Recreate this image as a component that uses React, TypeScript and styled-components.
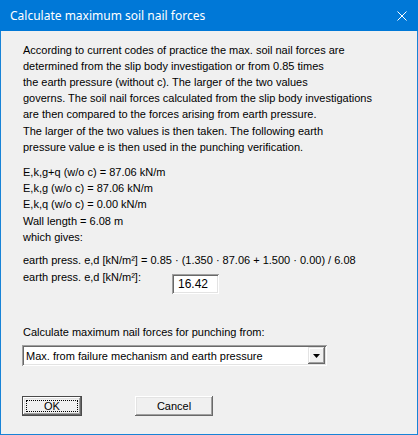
import styled, { createGlobalStyle } from 'styled-components'

const GlobalStyle = createGlobalStyle`
  html, body {
    margin: 0;
    padding: 0;
    background: #ffffff;
  }
`

const Window = styled.div`
  box-sizing: border-box;
  width: 418px;
  height: 435px;
  border: 1px solid #1883d7;
  border-top: none;
  background: #f0f0f0;
  display: flex;
  flex-direction: column;
  font-family: 'Liberation Sans', Arial, sans-serif;
  font-size: 11px;
  color: #000000;
`

const TitleBar = styled.div`
  height: 31px;
  flex: none;
  margin: 0 -1px;
  background: #0078d7;
  display: flex;
  align-items: center;
  justify-content: space-between;
  padding: 0 11px 0 10px;
`

const Title = styled.span`
  font-family: 'Noto Sans', 'Open Sans', sans-serif;
  font-size: 12px;
  color: #ffffff;
`

const CloseIcon = styled.svg`
  width: 10px;
  height: 10px;
`

const Body = styled.div`
  display: flex;
  flex-direction: column;
  padding: 11px 0 0 21px;
`

const Line = styled.div<{ $mt?: number }>`
  height: 16px;
  line-height: 16px;
  padding-left: 1px;
  margin-top: ${({ $mt }) => $mt || 0}px;
  white-space: nowrap;
`

const InputRow = styled.div`
  display: flex;
  align-items: flex-start;
  margin-top: 1px;
`

const InputLabel = styled(Line)`
  width: 149px;
`

const TextBox = styled.div`
  box-sizing: border-box;
  width: 47px;
  height: 20px;
  margin-top: 5px;
  padding: 0 4px 0 6px;
  line-height: 20px;
  font-size: 12px;
  background: #ffffff;
  box-shadow: inset 1px 1px #a0a0a0, inset -1px -1px #ffffff, inset 2px 2px #696969, inset -2px -2px #e3e3e3;
`

const Select = styled.div`
  box-sizing: border-box;
  width: 305px;
  height: 21px;
  margin-top: 5px;
  display: flex;
  align-items: center;
  justify-content: space-between;
  padding: 2px 2px 2px 4px;
  background: #ffffff;
  box-shadow: inset 1px 1px #a0a0a0, inset -1px -1px #ffffff, inset 2px 2px #696969, inset -2px -2px #e3e3e3;
`

const SelectArrow = styled.div`
  width: 17px;
  height: 17px;
  background: #f0f0f0;
  display: flex;
  align-items: center;
  justify-content: center;
  box-shadow: inset -1px -1px #696969, inset 1px 1px #e3e3e3, inset -2px -2px #a0a0a0, inset 2px 2px #ffffff;
`

const Buttons = styled.div`
  display: flex;
  gap: 53px;
  margin-top: 30px;
`

const Button = styled.button<{ $w: number; $default?: boolean }>`
  box-sizing: border-box;
  width: ${({ $w }) => $w}px;
  height: 20px;
  padding: 0;
  font-family: 'Liberation Sans', Arial, sans-serif;
  font-size: 11px;
  color: #000000;
  background: #f0f0f0;
  border: ${({ $default }) => ($default ? '1px solid #4a4a4a' : 'none')};
  box-shadow: inset -1px -1px #696969, inset 1px 1px #ffffff, inset -2px -2px #a0a0a0, inset 2px 2px #e3e3e3;
  display: flex;
  align-items: center;
  justify-content: center;
`

const FocusRect = styled.span`
  box-sizing: border-box;
  width: 52px;
  height: 12px;
  border: 1px dotted #000000;
  display: flex;
  align-items: center;
  justify-content: center;
  line-height: 12px;
`

export default function App() {
  return (
    <>
      <GlobalStyle />
      <Window>
        <TitleBar>
          <Title>Calculate maximum soil nail forces</Title>
          <CloseIcon viewBox="0 0 10 10">
            <path d="M0.5 0.5 L9.5 9.5 M9.5 0.5 L0.5 9.5" stroke="#ffffff" strokeWidth="1" fill="none" />
          </CloseIcon>
        </TitleBar>
        <Body>
          <Line>According to current codes of practice the max. soil nail forces are</Line>
          <Line>determined from the slip body investigation or from 0.85 times</Line>
          <Line>the earth pressure (without c). The larger of the two values</Line>
          <Line>governs. The soil nail forces calculated from the slip body investigations</Line>
          <Line>are then compared to the forces arising from earth pressure.</Line>
          <Line $mt={1}>The larger of the two values is then taken. The following earth</Line>
          <Line>pressure value e is then used in the punching verification.</Line>
          <Line $mt={9}>E,k,g+q (w/o c) = 87.06 kN/m</Line>
          <Line>E,k,g (w/o c) = 87.06 kN/m</Line>
          <Line>E,k,q (w/o c) = 0.00 kN/m</Line>
          <Line $mt={1}>Wall length = 6.08 m</Line>
          <Line>which gives:</Line>
          <Line $mt={7}>earth press. e,d [kN/m²] = 0.85 · (1.350 · 87.06 + 1.500 · 0.00) / 6.08</Line>
          <InputRow>
            <InputLabel>earth press. e,d [kN/m²]:</InputLabel>
            <TextBox>16.42</TextBox>
          </InputRow>
          <Line $mt={30}>Calculate maximum nail forces for punching from:</Line>
          <Select>
            <span>Max. from failure mechanism and earth pressure</span>
            <SelectArrow>
              <svg width="7" height="4" viewBox="0 0 7 4">
                <path d="M0 0 H7 L3.5 4 Z" fill="#000000" />
              </svg>
            </SelectArrow>
          </Select>
          <Buttons>
            <Button $w={60} $default>
              <FocusRect>OK</FocusRect>
            </Button>
            <Button $w={78}>Cancel</Button>
          </Buttons>
        </Body>
      </Window>
    </>
  )
}
